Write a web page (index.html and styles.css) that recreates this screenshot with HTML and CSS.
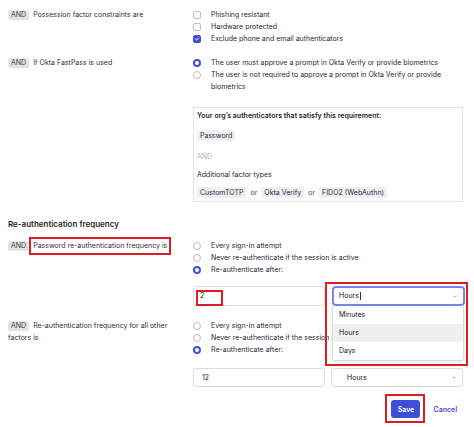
FILE: index.html
```html
<!DOCTYPE html>
<html lang="en">
<head>
<meta charset="utf-8">
<link rel="stylesheet" href="styles.css">
</head>
<body>
<div class="page">
  <div class="cond">
    <div class="label"><span class="and">AND</span>Possession factor constraints are</div>
    <div class="ctrl">
      <ul class="opts">
        <li><span class="cb"></span>Phishing resistant</li>
        <li><span class="cb"></span>Hardware protected</li>
        <li><span class="cb cb-on"><svg viewBox="0 0 8 8" width="8" height="8"><path d="M2 4.2 L3.4 5.5 L6 2.7" fill="none" stroke="#fff" stroke-width="1.3" stroke-linecap="round" stroke-linejoin="round"/></svg></span>Exclude phone and email authenticators</li>
      </ul>
    </div>
  </div>

  <div class="cond">
    <div class="label"><span class="and">AND</span>If Okta FastPass is used</div>
    <div class="ctrl">
      <ul class="opts">
        <li><span class="rd rd-on"></span>The user must approve a prompt in Okta Verify or provide biometrics</li>
        <li><span class="rd"></span><span>The user is not required to approve a prompt in Okta Verify or provide biometrics</span></li>
      </ul>
      <div class="authbox">
        <div class="auth-title">Your org’s authenticators that satisfy this requirement:</div>
        <div class="chips chips-first"><span class="chip">Password</span></div>
        <div class="auth-and">AND</div>
        <div class="auth-sub">Additional factor types</div>
        <div class="chips chips-last"><span class="chip">CustomTOTP</span><span class="or">or</span><span class="chip">Okta Verify</span><span class="or">or</span><span class="chip">FIDO2 (WebAuthn)</span></div>
      </div>
    </div>
  </div>

  <h2 class="heading">Re-authentication frequency</h2>

  <div class="cond cond-tight">
    <div class="label"><span class="and">AND</span><span class="mark">Password re-authentication frequency is</span></div>
    <div class="ctrl">
      <ul class="opts">
        <li><span class="rd"></span>Every sign-in attempt</li>
        <li><span class="rd"></span>Never re-authenticate if the session is active</li>
        <li><span class="rd rd-on"></span>Re-authenticate after:</li>
      </ul>
      <div class="fields">
        <div class="input input-edit"><span class="mark-box mark-num"></span>2</div>
        <div class="select-wrap">
          <div class="select select-focus">Hours<span class="caret-bar"></span><svg class="caret" viewBox="0 0 6 4" width="4" height="3"><path d="M1 3 L3 1 L5 3" fill="none" stroke="#777" stroke-width="1"/></svg></div>
          <ul class="menu">
            <li>Minutes</li>
            <li class="menu-hl">Hours</li>
            <li>Days</li>
          </ul>
          <span class="mark-box mark-menu"></span>
        </div>
      </div>
    </div>
  </div>

  <div class="cond">
    <div class="label"><span class="and">AND</span>Re-authentication frequency for all other factors is</div>
    <div class="ctrl">
      <ul class="opts">
        <li><span class="rd"></span>Every sign-in attempt</li>
        <li><span class="rd"></span>Never re-authenticate if the session is active</li>
        <li><span class="rd rd-on"></span>Re-authenticate after:</li>
      </ul>
      <div class="fields fields-2">
        <div class="input input-wide">12</div>
        <div class="select select-wide">Hours<svg class="caret" viewBox="0 0 6 4" width="4" height="3"><path d="M1 1 L3 3 L5 1" fill="none" stroke="#777" stroke-width="1"/></svg></div>
      </div>
      <div class="actions">
        <button class="btn-save">Save<span class="mark-box mark-save"></span></button>
        <button class="btn-cancel">Cancel</button>
      </div>
    </div>
  </div>
</div>
</body>
</html>
```

FILE: styles.css
```css
* { box-sizing: border-box; }
html, body { margin: 0; padding: 0; background: #fff; }
body {
  font-family: Inter, "Noto Sans", sans-serif;
  font-size: 7px;
  line-height: 12px;
  color: #2a2a2f;
}
.page {
  width: 474px;
  height: 427px;
  padding: 9px 9px 0 8px;
  overflow: hidden;
}
.cond {
  display: grid;
  grid-template-columns: 180px 272px;
  column-gap: 5px;
  margin-bottom: 12px;
}
.cond-tight { margin-bottom: 14px; }
.label { color: #2f2f34; }
.and {
  display: inline-block;
  background: #e4e4e6;
  color: #3a3a3f;
  border-radius: 2px;
  padding: 0 3px;
  line-height: 10px;
  margin-right: 4px;
}
.mark { position: relative; }
.mark::after {
  content: "";
  position: absolute;
  left: -4px;
  right: -4px;
  top: -4px;
  bottom: -5px;
  border: 2px solid #db1d24;
}
.opts { list-style: none; margin: 0; padding: 0; }
.opts li { display: flex; align-items: flex-start; }
.cb, .rd {
  flex: none;
  width: 8px;
  height: 8px;
  margin: 2px 10px 0 0;
  border: 1px solid #bdbdc2;
  background: #fff;
}
.cb { border-radius: 2px; }
.cb-on { background: #3f50d4; border-color: #3f50d4; display: flex; align-items: center; justify-content: center; }
.cb-on svg { display: block; }
.rd { border-radius: 50%; }
.rd-on { border: 2.5px solid #3f50d4; }

.authbox {
  margin-top: 14px;
  width: 270px;
  border: 1px solid #e3e3e6;
  padding: 2px 3px 3px 3px;
}
.auth-title { font-weight: 600; line-height: 11px; color: #1f1f24; }
.chips { display: flex; align-items: center; height: 11px; }
.chips-first { margin-top: 9px; }
.chips-last { margin-top: 7px; }
.chip {
  background: #eef0f6;
  padding: 0 3px;
  line-height: 11px;
  border-radius: 1px;
  color: #2a2a2f;
}
.or { margin: 0 4px; color: #4a4a50; }
.auth-and { margin-top: 10px; line-height: 11px; color: #b1b1b6; }
.auth-sub { margin-top: 7px; line-height: 11px; }

.heading {
  margin: 16px 0 10px 0;
  font-size: 8px;
  font-weight: 600;
  line-height: 12px;
  color: #1f1f24;
}

.fields {
  display: grid;
  grid-template-columns: 132px 132px;
  column-gap: 6px;
  margin-top: 10px;
  height: 20px;
}
.fields-2 { margin-top: 12px; height: 19px; }
.input, .select {
  position: relative;
  height: 20px;
  border: 1px solid #dcdce0;
  border-radius: 3px;
  display: flex;
  align-items: center;
  padding-left: 6px;
  color: #222;
}
.input-wide { height: 19px; padding-left: 8px; }
.select-wide { height: 19px; padding-left: 15px; }
.select-wrap { position: relative; }
.select-focus {
  border: 2px solid #7884e6;
  border-radius: 4px;
  padding-left: 5px;
  margin-left: 1px;
  margin-right: -2px;
}
.caret-bar { display: inline-block; width: 1px; height: 8px; background: #333; margin-left: 1px; }
.caret { position: absolute; right: 6px; top: 50%; margin-top: -1.5px; }
.menu {
  position: absolute;
  left: 1px;
  right: -1px;
  top: 20px;
  margin: 0;
  padding: 0;
  list-style: none;
  background: #fff;
  border: 1px solid #dcdce0;
  border-top: none;
  border-radius: 0 0 3px 3px;
  box-shadow: 0 2px 3px rgba(0,0,0,0.08);
  z-index: 2;
}
.menu li { height: 18px; line-height: 18px; padding-left: 6px; color: #222; }
.menu .menu-hl { background: #f0f0f2; }
.mark-box { position: absolute; border: 2px solid #db1d24; pointer-events: none; z-index: 3; }
.mark-num { left: 2px; top: 3px; width: 27px; bottom: -1px; }
.mark-menu { left: -6px; right: -5px; top: -4px; bottom: -60px; }

.actions {
  display: flex;
  justify-content: flex-end;
  align-items: center;
  margin-top: 13px;
  width: 270px;
  padding-right: 6px;
}
.btn-save {
  position: relative;
  width: 29px;
  height: 18px;
  border: none;
  border-radius: 3px;
  background: #3d4fd6;
  color: #fff;
  font: 600 7px Inter, sans-serif;
  padding: 0;
}
.mark-save { left: -6px; right: -5px; top: -6px; bottom: -5px; }
.btn-cancel {
  margin-left: 13px;
  border: none;
  background: none;
  color: #3d4fd6;
  font: 600 7px Inter, sans-serif;
  padding: 0;
}
```
